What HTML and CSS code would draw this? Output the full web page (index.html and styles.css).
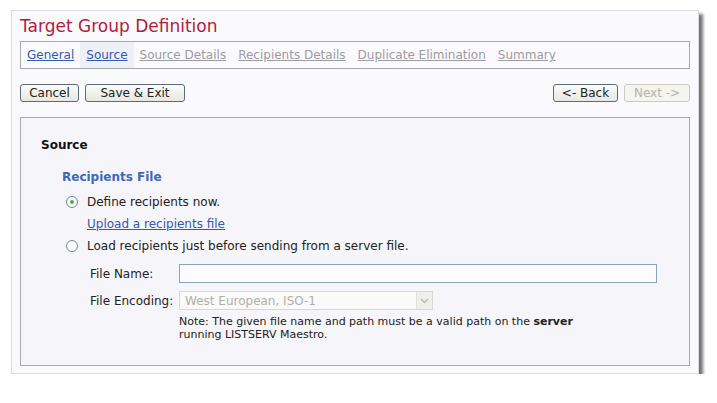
FILE: index.html
```html
<!DOCTYPE html>
<html lang="en">
<head>
    <meta charset="UTF-8">
    <title>Target Group Definition</title>
    <link rel="stylesheet" href="styles.css">
</head>
<body>
    <div class="window">
        <h1 class="page-title">Target Group Definition</h1>

        <div class="tabs">
            <a class="tab done" href="#">General</a>
            <a class="tab current" href="#">Source</a>
            <a class="tab" href="#">Source Details</a>
            <a class="tab" href="#">Recipients Details</a>
            <a class="tab" href="#">Duplicate Elimination</a>
            <a class="tab" href="#">Summary</a>
        </div>

        <div class="toolbar">
            <div class="toolbar-group">
                <button class="btn btn-cancel">Cancel</button>
                <button class="btn btn-save">Save &amp; Exit</button>
            </div>
            <div class="toolbar-group">
                <button class="btn btn-back">&lt;- Back</button>
                <button class="btn btn-next" disabled>Next -&gt;</button>
            </div>
        </div>

        <div class="content">
            <h2 class="section-title">Source</h2>
            <h3 class="sub-title">Recipients File</h3>

            <label class="option">
                <span class="radio checked"></span>
                Define recipients now.
            </label>
            <a class="upload-link" href="#">Upload a recipients file</a>

            <label class="option">
                <span class="radio"></span>
                Load recipients just before sending from a server file.
            </label>

            <div class="field-grid">
                <span class="field-label">File Name:</span>
                <input class="text-input" type="text">

                <span class="field-label">File Encoding:</span>
                <div class="select disabled">
                    <span>West European, ISO-1</span>
                    <span class="select-arrow">
                        <svg width="9" height="6" viewBox="0 0 9 6"><path d="M1 1 L4.5 4.5 L8 1" fill="none" stroke="#b9b9b3" stroke-width="1.4"/></svg>
                    </span>
                </div>

                <span></span>
                <p class="note">Note: The given file name and path must be a valid path on the <b>server</b><br>running LISTSERV Maestro.</p>
            </div>
        </div>
    </div>
</body>
</html>
```

FILE: styles.css
```css
* {
    margin: 0;
    padding: 0;
    box-sizing: border-box;
}

body {
    background: #fff;
    font-family: "DejaVu Sans", Verdana, sans-serif;
    font-size: 12px;
    color: #222;
}

.window {
    margin: 10px 0 0 11px;
    width: 688px;
    height: 364px;
    padding: 0 8px;
    background: #fafafc;
    border: 1px solid #dcdce0;
    box-shadow: 4px 4px 3px rgba(0, 0, 0, 0.55);
}

.page-title {
    font-size: 17px;
    font-weight: normal;
    color: #b01c3c;
    height: 30px;
    padding-top: 5px;
}

.tabs {
    display: flex;
    height: 28px;
    border: 1px solid #a9a9ab;
    background: #fafafc;
}

.tab {
    display: flex;
    align-items: center;
    padding: 0 6px;
    color: #9c9ca2;
}

.tab.done,
.tab.current {
    color: #3558b0;
}

.tab.current {
    background: #edf0f7;
}

.toolbar {
    display: flex;
    justify-content: space-between;
    margin-top: 15px;
}

.toolbar-group {
    display: flex;
    gap: 6px;
}

.btn {
    font-family: inherit;
    font-size: 12px;
    height: 18px;
    padding: 0;
    color: #222;
    background: linear-gradient(#fbfbf8, #e8e8e2);
    border: 1px solid #5d6a7c;
    border-radius: 3px;
}

.btn-cancel { width: 59px; }
.btn-save { width: 100px; }
.btn-back { width: 65px; }
.btn-next { width: 66px; }

.btn:disabled {
    color: #b3b3ad;
    border-color: #cdcbc0;
    background: #f5f5f0;
}

.content {
    margin-top: 15px;
    height: 249px;
    border: 1px solid #a9a9ab;
    background: #f6f5f9;
    padding: 20px 0 0 20px;
}

.section-title {
    font-size: 12px;
    line-height: 14px;
    font-weight: bold;
    color: #111;
}

.sub-title {
    font-size: 12px;
    line-height: 15px;
    font-weight: bold;
    color: #3f66b7;
    margin: 18px 0 6px 21px;
}

.option {
    display: flex;
    align-items: center;
    margin-left: 25px;
    height: 22px;
}

.radio {
    width: 12px;
    height: 12px;
    border: 1px solid #71849f;
    border-radius: 50%;
    background: #fbfbfd;
    margin-right: 9px;
    display: flex;
    align-items: center;
    justify-content: center;
}

.radio.checked::after {
    content: "";
    width: 4px;
    height: 4px;
    border-radius: 50%;
    background: #3fb53f;
}

.upload-link {
    display: block;
    margin-left: 46px;
    color: #3558b0;
    height: 22px;
    line-height: 22px;
}

.field-grid {
    display: grid;
    grid-template-columns: 89px 478px;
    row-gap: 8px;
    margin: 7px 0 0 49px;
    align-items: center;
}

.text-input {
    height: 19px;
    border: 1px solid #8da1ba;
    background: #fcfcfe;
}

.select {
    width: 254px;
    height: 19px;
    display: flex;
    align-items: center;
    justify-content: space-between;
    border: 1px solid #d8d8d2;
    background: #fafaf8;
    padding-left: 5px;
    color: #b0b0ab;
}

.select-arrow {
    width: 16px;
    height: 17px;
    display: flex;
    align-items: center;
    justify-content: center;
    border-left: 1px solid #e2e2dc;
    background: #f0f0ea;
}

.note {
    font-size: 11px;
    line-height: 13px;
    color: #222;
    margin-top: -3px;
}
```
